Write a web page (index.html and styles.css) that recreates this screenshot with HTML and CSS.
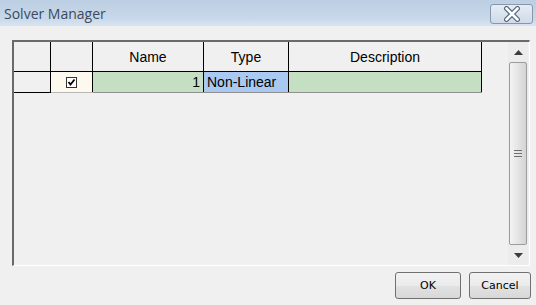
FILE: index.html
```html
<!DOCTYPE html>
<html lang="en">
  <head>
    <meta charset="UTF-8" />
    <title>Solver Manager</title>
    <link rel="stylesheet" href="styles.css">
  </head>
  <body>
    <div class="window">
      <div class="titlebar">
        <span class="title">Solver Manager</span>
        <div class="close">
          <svg width="20" height="16" viewBox="0 0 20 16">
            <path d="M4.5 2.5 L15.5 13.5 M15.5 2.5 L4.5 13.5" stroke="#56667c" stroke-width="5" stroke-linecap="round" />
            <path d="M4.5 2.5 L15.5 13.5 M15.5 2.5 L4.5 13.5" stroke="#ffffff" stroke-width="2.6" stroke-linecap="round" />
          </svg>
        </div>
      </div>

      <div class="content">
        <div class="frame">
          <div class="grid-area">
            <table class="grid">
              <thead>
                <tr>
                  <th class="c0"></th>
                  <th class="c1"></th>
                  <th class="c2">Name</th>
                  <th class="c3">Type</th>
                  <th class="c4">Description</th>
                </tr>
              </thead>
              <tbody>
                <tr>
                  <td class="rowhead"></td>
                  <td class="check">
                    <svg width="11" height="11" viewBox="0 0 11 11">
                      <rect x="0.5" y="0.5" width="10" height="10" fill="#ffffff" stroke="#333333" />
                      <path d="M2.5 5 L4.5 7.5 L8.5 2.5" stroke="#000000" stroke-width="1.8" fill="none" />
                    </svg>
                  </td>
                  <td class="name">1</td>
                  <td class="type">Non-Linear</td>
                  <td class="desc"></td>
                </tr>
              </tbody>
            </table>
          </div>
          <div class="scrollbar">
            <div class="arrow">
              <svg width="9" height="5" viewBox="0 0 9 5"><path d="M0 5 L4.5 0 L9 5 Z" fill="#3c3c3c" /></svg>
            </div>
            <div class="thumb">
              <span class="grip"></span>
              <span class="grip"></span>
              <span class="grip"></span>
            </div>
            <div class="arrow">
              <svg width="9" height="5" viewBox="0 0 9 5"><path d="M0 0 L9 0 L4.5 5 Z" fill="#3c3c3c" /></svg>
            </div>
          </div>
        </div>

        <div class="buttons">
          <button class="btn ok">OK</button>
          <button class="btn cancel">Cancel</button>
        </div>
      </div>
    </div>
  </body>
</html>
```

FILE: styles.css
```css
html,
body {
  margin: 0;
  padding: 0;
  background: #f0f0f0;
}

.window {
  width: 536px;
  height: 305px;
  background: #f0f0f0;
  overflow: hidden;
}

.titlebar {
  height: 26px;
  display: flex;
  align-items: center;
  justify-content: space-between;
  background: linear-gradient(to bottom, #bccee2 0%, #c8d8ea 70%, #d8e4f1 100%);
}
.title {
  font-family: "Open Sans", "Noto Sans", sans-serif;
  font-size: 14px;
  color: #3a4a60;
  padding-left: 4px;
}
.close {
  width: 41px;
  height: 18px;
  margin-right: 3px;
  margin-top: 1px;
  border: 1px solid #8796ab;
  border-radius: 3px;
  background: linear-gradient(to bottom, #e4ecf5 0%, #cfdbe9 100%);
  display: flex;
  align-items: center;
  justify-content: center;
}

.content {
  padding: 14px 3px 0 12px;
}

.frame {
  width: 515px;
  height: 223px;
  display: flex;
  border-left: 2px solid #6a6a6a;
  border-top: 2px solid #6a6a6a;
  border-right: 1px solid #ffffff;
  border-bottom: 1px solid #ffffff;
}
.grid-area {
  flex: 1;
}

table.grid {
  border-collapse: collapse;
  font-family: "Liberation Sans", Arial, sans-serif;
  font-size: 14px;
  color: #000000;
}
table.grid th,
table.grid td {
  border: 1px solid #000000;
  padding: 0 3px;
}
table.grid th {
  height: 29px;
  font-weight: normal;
  text-align: center;
  background: #f0f0f0;
  border-top: none;
}
table.grid th.c0,
table.grid td.rowhead {
  border-left: none;
}
table.grid td {
  height: 20px;
}
.c0 { width: 30px; }
.c1 { width: 35px; }
.c2 { width: 104px; }
.c3 { width: 78px; }
.c4 { width: 186px; }

table.grid td.rowhead {
  background: #f0f0f0;
}
table.grid td.check {
  background: #fdf9ee;
  text-align: center;
  border-bottom-color: #b8b8b8;
}
table.grid td.check svg {
  display: block;
  margin: 0 auto;
}
table.grid td.name {
  background: #c4dfc1;
  text-align: right;
  border-bottom-color: #909090;
}
table.grid td.type {
  background: #a9c9f1;
  text-align: left;
  border-bottom-color: #909090;
}
table.grid td.desc {
  background: #c4dfc1;
  border-bottom-color: #909090;
}

.scrollbar {
  width: 20px;
  margin-right: 1px;
  display: flex;
  flex-direction: column;
  background: #ececec;
}
.arrow {
  height: 20px;
  display: flex;
  align-items: center;
  justify-content: center;
}
.thumb {
  flex: 1;
  margin: 0 1px;
  border: 1px solid #9d9d9d;
  border-radius: 2px;
  background: linear-gradient(to right, #f3f3f3 0%, #e6e6e6 45%, #d4d4d4 100%);
  display: flex;
  flex-direction: column;
  align-items: center;
  justify-content: center;
  gap: 2px;
}
.grip {
  display: block;
  width: 8px;
  height: 1px;
  background: #707070;
}

.buttons {
  display: flex;
  justify-content: flex-end;
  gap: 8px;
  padding-top: 6px;
  padding-right: 2px;
}
.btn {
  height: 27px;
  font-family: "DejaVu Sans", Tahoma, sans-serif;
  font-size: 11px;
  color: #000000;
  background: linear-gradient(to bottom, #f2f2f2 0%, #ebebeb 50%, #e2e2e2 51%, #d8d8d8 100%);
  border: 1px solid #707070;
  border-radius: 3px;
  padding: 0;
}
.btn.ok {
  width: 66px;
}
.btn.cancel {
  width: 62px;
}
```
